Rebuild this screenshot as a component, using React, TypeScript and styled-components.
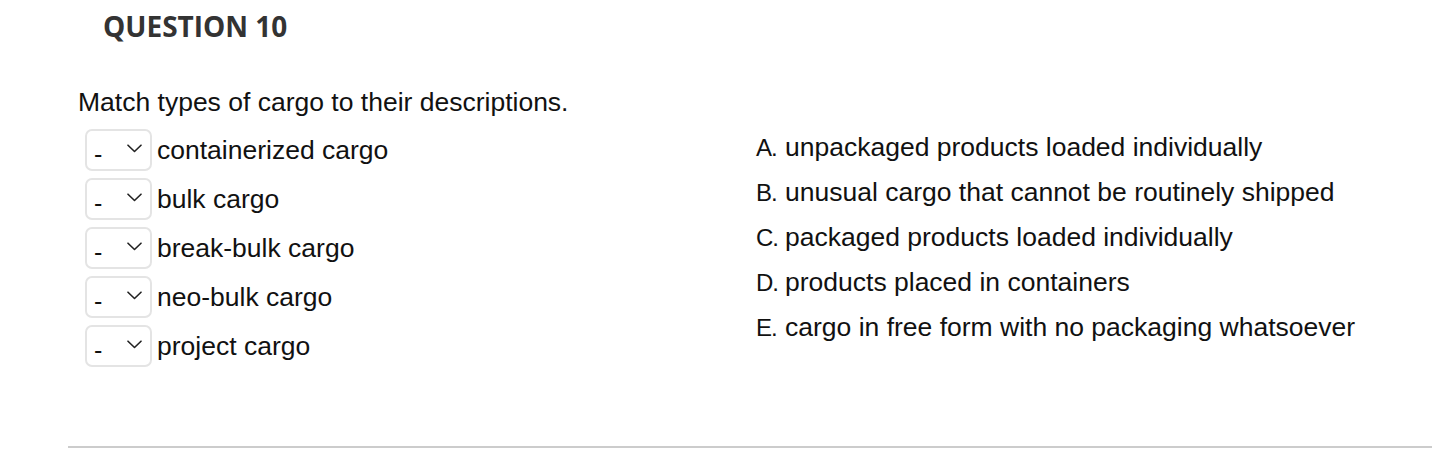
import React from "react";
import styled, { createGlobalStyle } from "styled-components";

const Global = createGlobalStyle`
  html, body { margin: 0; padding: 0; background: #fff; }
  body { font-family: "Liberation Sans", Arial, sans-serif; color: #111; }
`;

const Page = styled.div`
  width: 1432px;
  height: 458px;
  box-sizing: border-box;
  padding: 7px 0 0 68px;
  display: flex;
  flex-direction: column;
`;

const Heading = styled.h2`
  margin: 0 0 0 35px;
  font-family: "Open Sans", sans-serif;
  font-weight: 700;
  font-size: 28px;
  line-height: 38px;
  color: #333;
`;

const Prompt = styled.p`
  margin: 42px 0 0 10px;
  font-size: 26.5px;
  line-height: 30px;
  color: #111;
`;

const Body = styled.div`
  display: flex;
  margin-top: 12px;
`;

const LeftCol = styled.div`
  width: 671px;
  margin-left: 17px;
  display: flex;
  flex-direction: column;
  gap: 7px;
`;

const MatchRow = styled.div`
  display: flex;
  align-items: center;
  gap: 5px;
`;

const SelectBox = styled.div`
  box-sizing: border-box;
  width: 67px;
  height: 42px;
  border: 2px solid #e4e4e4;
  border-radius: 7px;
  display: flex;
  align-items: center;
  justify-content: space-between;
  padding: 0 8px 0 7px;
  background: #fff;
`;

const Dash = styled.span`
  font-size: 25px;
  line-height: 22px;
  margin-top: 8px;
  color: #111;
`;

const Chevron = styled.svg`
  width: 15px;
  height: 9px;
  margin-top: -3px;
`;

const Label = styled.span`
  font-size: 26.5px;
  line-height: 30px;
  color: #111;
`;

const RightCol = styled.div`
  padding-top: 3px;
  display: flex;
  flex-direction: column;
  gap: 15px;
`;

const Option = styled.div`
  display: flex;
  align-items: baseline;
  height: 30px;
  font-size: 26.5px;
  line-height: 30px;
  color: #111;
`;

const Letter = styled.span`
  font-size: 24px;
  line-height: 30px;
  width: 29px;
  letter-spacing: -1px;
  color: #111;
`;

const Rule = styled.hr`
  margin: auto 0 10px 0;
  border: none;
  height: 2px;
  background: #cccccc;
  width: 100%;
`;

const items = [
  "containerized cargo",
  "bulk cargo",
  "break-bulk cargo",
  "neo-bulk cargo",
  "project cargo",
];

const options = [
  ["A.", "unpackaged products loaded individually"],
  ["B.", "unusual cargo that cannot be routinely shipped"],
  ["C.", "packaged products loaded individually"],
  ["D.", "products placed in containers"],
  ["E.", "cargo in free form with no packaging whatsoever"],
];

export default function App() {
  return (
    <>
      <Global />
      <Page>
        <Heading>QUESTION 10</Heading>
        <Prompt>Match types of cargo to their descriptions.</Prompt>
        <Body>
          <LeftCol>
            {items.map((it) => (
              <MatchRow key={it}>
                <SelectBox role="combobox" aria-label={it}>
                  <Dash>-</Dash>
                  <Chevron viewBox="0 0 15 9" fill="none">
                    <path d="M1 1.2 L7.5 7.5 L14 1.2" stroke="#222" strokeWidth="1.6" strokeLinecap="round" strokeLinejoin="round" />
                  </Chevron>
                </SelectBox>
                <Label>{it}</Label>
              </MatchRow>
            ))}
          </LeftCol>
          <RightCol>
            {options.map(([l, t]) => (
              <Option key={l}>
                <Letter>{l}</Letter>
                <span>{t}</span>
              </Option>
            ))}
          </RightCol>
        </Body>
        <Rule />
      </Page>
    </>
  );
}
